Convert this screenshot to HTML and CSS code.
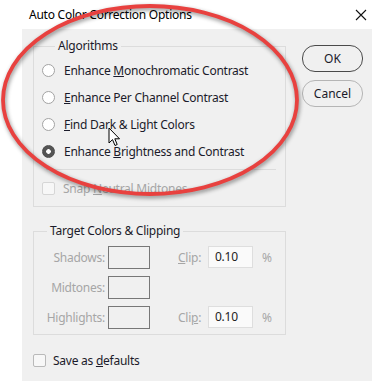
FILE: index.html
```html
<!DOCTYPE html>
<html lang="en">

<head>
    <meta charset="UTF-8">
    <title>Auto Color Correction Options</title>
    <link rel="stylesheet" href="styles.css">
</head>

<body>
    <div class="dialog">
        <div class="titlebar">
            <span class="title">Auto Color Correction Options</span>
            <svg class="close" width="12" height="12" viewBox="0 0 12 12">
                <path d="M1 1L11 11M11 1L1 11" stroke="#111" stroke-width="1.1" fill="none" />
            </svg>
        </div>
        <div class="main">
            <div class="side"></div>
            <div class="content">
                <div class="left">
                    <fieldset class="group algorithms">
                        <legend>Algorithms</legend>
                        <div class="row"><span class="radio"></span><span>Enhance <u>M</u>onochromatic Contrast</span></div>
                        <div class="row"><span class="radio"></span><span><u>E</u>nhance Per Channel Contrast</span></div>
                        <div class="row"><span class="radio"></span><span><u>F</u>ind Dark &amp; Light Colors</span></div>
                        <div class="row"><span class="radio checked"></span><span>Enhance <u>B</u>rightness and Contrast</span></div>
                        <div class="sep"></div>
                        <div class="row disabled"><span class="check"></span><span>Snap <u>N</u>eutral Midtones</span></div>
                    </fieldset>

                    <fieldset class="group target">
                        <legend>Target Colors &amp; Clipping</legend>
                        <div class="trow">
                            <span class="lbl">Shadows:</span>
                            <span class="swatch"></span>
                            <span class="clip"><u>C</u>lip:</span>
                            <span class="field">0.10</span>
                            <span class="pct">%</span>
                        </div>
                        <div class="trow">
                            <span class="lbl">Midtones:</span>
                            <span class="swatch"></span>
                        </div>
                        <div class="trow">
                            <span class="lbl">Highlights:</span>
                            <span class="swatch"></span>
                            <span class="clip">Cli<u>p</u>:</span>
                            <span class="field">0.10</span>
                            <span class="pct">%</span>
                        </div>
                    </fieldset>

                    <div class="row save"><span class="check"></span><span>Save as <u>d</u>efaults</span></div>
                </div>
                <div class="buttons">
                    <button class="btn ok">OK</button>
                    <button class="btn">Cancel</button>
                </div>
            </div>
        </div>

        <!-- annotation drawn over the dialog -->
        <svg class="mark" width="372" height="381" viewBox="0 0 372 381">
            <ellipse cx="150" cy="100" rx="147" ry="94" fill="none" stroke="#e8413f" stroke-width="3.8" />
        </svg>
        <svg class="cursor" width="14" height="21" viewBox="0 0 14 21">
            <path d="M1 1L1 16L4.5 12.6L7 18.5L9.2 17.5L6.8 11.8L11.5 11.8Z" fill="#fff" stroke="#000" stroke-width="1" stroke-linejoin="round" />
        </svg>
    </div>
</body>

</html>
```

FILE: styles.css
```css
body {
    margin: 0;
    padding: 0;
    background: #fff;
}

.dialog {
    position: relative;
    width: 372px;
    height: 381px;
    overflow: hidden;
    font-family: "Noto Sans", "DejaVu Sans", sans-serif;
    font-size: 12px;
    letter-spacing: -0.25px;
    color: #1b1b2a;
}

.titlebar {
    display: flex;
    align-items: center;
    justify-content: space-between;
    height: 29px;
    padding: 0 5px 0 29px;
    box-sizing: border-box;
    background: #fff;
}

.titlebar .title {
    font-size: 12px;
    color: #000;
}

.main {
    display: flex;
    height: 352px;
}

.main .side {
    width: 22px;
    background: #fff;
}

.content {
    flex: 1;
    display: flex;
    background: #f0f0f0;
    padding: 9px 0 0 11px;
}

.left {
    width: 253px;
}

.group {
    margin: 0;
    padding: 0 0 0 8px;
    border: 1px solid #dcdcdc;
    min-width: 0;
}

.group legend {
    margin-left: 13px;
    padding: 0 3px;
    line-height: 16px;
    font-size: 12px;
}

.algorithms {
    height: 169px;
    box-sizing: border-box;
    padding-top: 3px;
}

.row {
    display: flex;
    align-items: center;
    height: 27px;
    white-space: nowrap;
}

.radio {
    width: 11px;
    height: 11px;
    margin-right: 9px;
    border: 1px solid #a3a3a3;
    border-radius: 50%;
    background: #fff;
    flex: none;
}

.radio.checked {
    border-color: #4d4d4d;
    background: radial-gradient(circle, #fff 0, #fff 2px, #545454 2.6px);
}

.check {
    width: 11px;
    height: 11px;
    margin-right: 8px;
    border: 1px solid #b9b9b9;
    border-radius: 2px;
    background: #f7f7f7;
    flex: none;
}

.sep {
    height: 1px;
    margin: 4px 9px 0 4px;
    background: #dcdcdc;
}

.disabled {
    color: #a6a6a6;
    height: 36px;
}

.disabled .check {
    border-color: #d6d6d6;
}

.target {
    margin-top: 16px;
    height: 112px;
    box-sizing: border-box;
    padding: 3px 0 0 0;
}

.trow {
    display: flex;
    align-items: center;
    height: 30px;
    color: #a6a6a6;
}

.trow .lbl {
    width: 71px;
    text-align: right;
    margin-right: 3px;
}

.trow .swatch {
    width: 40px;
    height: 21px;
    border: 1px solid #777;
    background: #f0f0f0;
    margin-right: 28px;
}

.trow .clip {
    width: 30px;
}

.trow .field {
    width: 37px;
    height: 20px;
    line-height: 20px;
    padding-left: 6px;
    border: 1px solid #dedede;
    background: #fafafa;
    color: #222;
    margin-right: 9px;
}

.save {
    margin-top: 15px;
    height: 20px;
}

.save .check {
    margin-right: 7px;
}

.buttons {
    display: flex;
    flex-direction: column;
    gap: 8px;
    margin-left: 16px;
    padding-top: 7px;
}

.btn {
    width: 61px;
    height: 27px;
    padding: 0;
    border: 1px solid #b5b5b5;
    border-radius: 13px;
    background: #f0f0f0;
    font-family: "Noto Sans", "DejaVu Sans", sans-serif;
    font-size: 12px;
    color: #1b1b2a;
    outline: none;
}

.btn.ok {
    border-color: #4a4a4a;
}

.mark {
    position: absolute;
    top: 0;
    left: 0;
    pointer-events: none;
    filter: drop-shadow(1px 2px 2px rgba(0, 0, 0, 0.45));
}

.cursor {
    position: absolute;
    left: 108px;
    top: 127px;
    pointer-events: none;
}
```
